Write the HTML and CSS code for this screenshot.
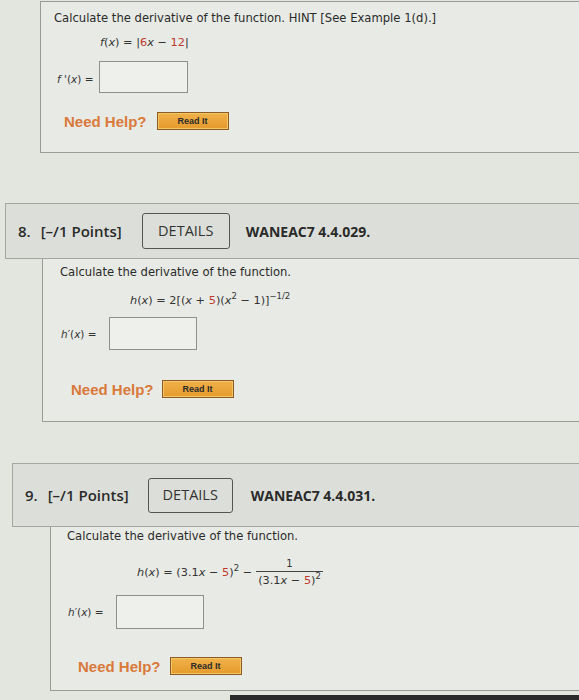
FILE: index.html
```html
<!DOCTYPE html>
<html>
<head>
<meta charset="utf-8">
<link rel="stylesheet" href="styles.css">
</head>
<body>
<div class="page">
  <section class="body b7">
    <p class="prompt">Calculate the derivative of the function. HINT [See Example 1(d).]</p>
    <div class="formula f7"><i>f</i>(<i>x</i>) = |<span class="red">6</span><i>x</i> &minus; <span class="red">12</span>|</div>
    <div class="answer a7"><span class="lbl"><i>f</i>&nbsp;'(<i>x</i>) =</span><span class="box"></span></div>
    <div class="help h7"><span class="need">Need Help?</span><span class="readit">Read It</span></div>
  </section>

  <header class="head hd8">
    <span class="num">8.</span><span class="pts">[&ndash;/1 Points]</span>
    <span class="details">DETAILS</span>
    <span class="code">WANEAC7 4.4.029.</span>
  </header>
  <section class="body b8">
    <p class="prompt">Calculate the derivative of the function.</p>
    <div class="formula f8"><i>h</i>(<i>x</i>) = 2[(<i>x</i> + <span class="red">5</span>)(<i>x</i><sup>2</sup> &minus; 1)]<sup>&minus;1/2</sup></div>
    <div class="answer a8"><span class="lbl"><i>h</i>&prime;(<i>x</i>) =</span><span class="box"></span></div>
    <div class="help h8"><span class="need">Need Help?</span><span class="readit">Read It</span></div>
  </section>

  <header class="head hd9">
    <span class="num">9.</span><span class="pts">[&ndash;/1 Points]</span>
    <span class="details">DETAILS</span>
    <span class="code">WANEAC7 4.4.031.</span>
  </header>
  <section class="body b9">
    <p class="prompt">Calculate the derivative of the function.</p>
    <div class="formula f9"><span><i>h</i>(<i>x</i>) = (3.1<i>x</i> &minus; <span class="red">5</span>)<sup>2</sup> &minus; </span><span class="frac"><span class="nume">1</span><span class="deno">(3.1<i>x</i> &minus; <span class="red">5</span>)<sup>2</sup></span></span></div>
    <div class="answer a9"><span class="lbl"><i>h</i>&prime;(<i>x</i>) =</span><span class="box"></span></div>
    <div class="help h9"><span class="need">Need Help?</span><span class="readit">Read It</span></div>
  </section>
  <div class="bezel"></div>
</div>
</body>
</html>
```

FILE: styles.css
```css
html, body {
  margin: 0;
  padding: 0;
}
body {
  width: 579px;
  height: 700px;
  overflow: hidden;
  background: #e3e5df;
  font-family: "DejaVu Sans", Verdana, sans-serif;
  color: #2a2a2a;
}
.page {
  display: flex;
  flex-direction: column;
  padding-top: 1px;
}
.body {
  border: 1px solid #9a9c98;
  border-right: none;
  background: #e8eae5;
  box-sizing: border-box;
  display: flex;
  flex-direction: column;
  align-items: flex-start;
}
.prompt {
  margin: 0;
  font-size: 11.6px;
  line-height: 14px;
}
.formula {
  font-size: 11.3px;
  line-height: 14px;
  color: #333;
}
.formula sup {
  font-size: 8.5px;
  line-height: 0;
  vertical-align: 5px;
}
.red { color: #c0392b; }
.answer {
  display: flex;
  align-items: center;
  font-size: 10.5px;
  color: #333;
}
.box {
  display: block;
  width: 87px;
  height: 30px;
  border: 1px solid #8e908c;
  background: #eef0ec;
}
.help {
  display: flex;
  align-items: center;
}
.need {
  font-family: "Liberation Sans", Arial, sans-serif;
  font-weight: bold;
  font-size: 15px;
  color: #d9793a;
}
.readit {
  display: block;
  box-sizing: border-box;
  width: 72px;
  height: 18px;
  border: 1px solid #8c5a22;
  background: linear-gradient(#f0b24a, #e59a2c);
  box-shadow: inset 0 0 0 1px #f3c766;
  font-family: "Liberation Sans", Arial, sans-serif;
  font-weight: bold;
  font-size: 9px;
  line-height: 16px;
  text-align: center;
  color: #2a2a2a;
}
.head {
  display: flex;
  align-items: center;
  border: 1px solid #a4a6a2;
  border-right: none;
  background: #dcdfd9;
  box-sizing: border-box;
  font-family: "Open Sans", sans-serif;
  font-weight: 600;
  font-size: 15px;
  color: #2a2a2a;
}
.num { margin-right: 10px; }
.details {
  display: block;
  box-sizing: border-box;
  border: 1.5px solid #555;
  border-radius: 3px;
  font-weight: 400;
  font-size: 14.5px;
  color: #333;
  text-align: center;
}
.code { font-weight: 700; font-size: 14px; }

/* question 7 */
.b7 {
  margin-left: 40px;
  height: 152px;
  padding-left: 13px;
}
.b7 .prompt { margin-top: 9px; }
.f7 { margin-top: 11px; margin-left: 46px; }
.a7 { margin-top: 11px; margin-left: 3px; }
.a7 .lbl { margin-right: 6px; margin-top: 3px; }
.h7 { margin-top: 19px; margin-left: 10px; }
.h7 .need { margin-right: 10px; }

/* question 8 */
.hd8 {
  margin-top: 50px;
  margin-left: 5px;
  height: 56px;
  padding-left: 12px;
}
.hd8 .details { width: 88px; height: 36px; line-height: 33px; margin: 0 16px 0 20px; }
.b8 {
  margin-left: 42px;
  height: 163px;
  border-top: none;
  padding-left: 17px;
}
.b8 .prompt { margin-top: 6px; }
.f8 { margin-top: 15px; margin-left: 70px; }
.a8 { margin-top: 9px; margin-left: 1px; }
.a8 .lbl { margin-right: 12px; }
.a8 .box { width: 86px; height: 31px; }
.h8 { margin-top: 30px; margin-left: 11px; }
.h8 .need { margin-right: 8px; }

/* question 9 */
.hd9 {
  margin-top: 41px;
  margin-left: 12px;
  height: 64px;
  padding-left: 12px;
}
.hd9 .details { width: 85px; height: 35px; line-height: 32px; margin: 0 18px 0 19px; }
.b9 {
  margin-left: 50px;
  height: 164px;
  border-top: none;
  padding-left: 16px;
}
.b9 .prompt { margin-top: 2px; }
.f9 {
  display: flex;
  align-items: center;
  margin-top: 14px;
  margin-left: 70px;
}
.frac {
  display: inline-flex;
  flex-direction: column;
  align-items: center;
  margin-left: 4px;
}
.nume {
  font-size: 10px;
  line-height: 13px;
  padding: 0 0 1px;
}
.deno {
  border-top: 1px solid #444;
  padding: 2px 2px 0;
  line-height: 14px;
}
.a9 { margin-top: 7px; margin-left: 1px; }
.a9 .lbl { margin-right: 12px; }
.a9 .box { width: 86px; height: 32px; }
.h9 { margin-top: 28px; margin-left: 11px; }
.h9 .need { margin-right: 9px; }

.bezel {
  margin-top: 4px;
  margin-left: 230px;
  height: 6px;
  background: #2b2b2b;
}
```
